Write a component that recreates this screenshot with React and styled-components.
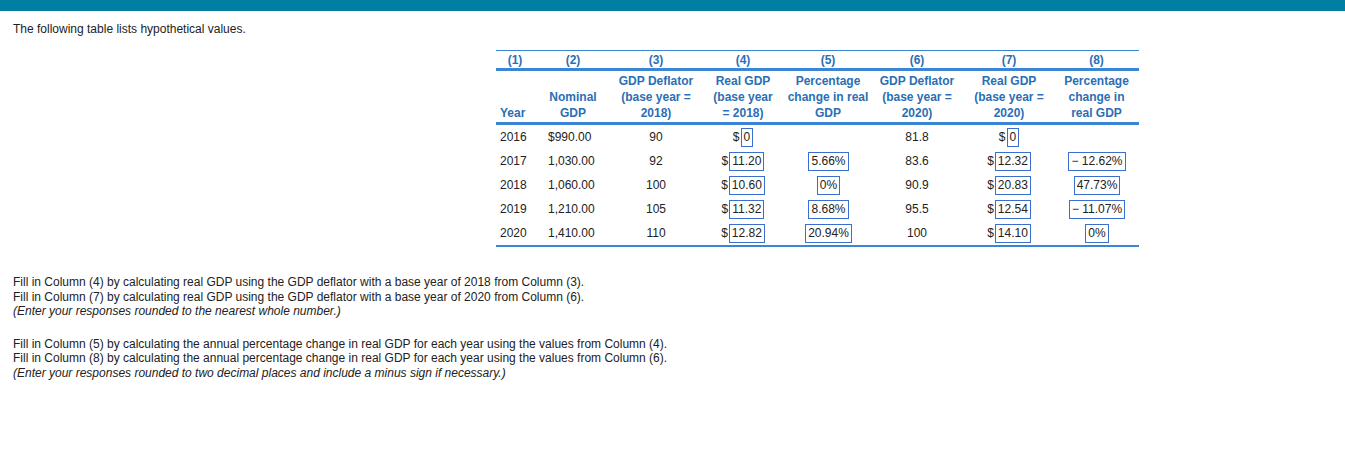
import React from "react";
import styled, { createGlobalStyle } from "styled-components";

const G = createGlobalStyle`
  body { margin: 0; font-family: Arial, "Liberation Sans", sans-serif; font-size: 12px; color: #222; background: #fff; }
`;
const TopBar = styled.div`height: 11px; background: #007fa3;`;
const Content = styled.div`padding: 11px 0 0 13px;`;
const Intro = styled.p`margin: 0 0 14px 0; line-height: 14px;`;
const Table = styled.table`
  margin-left: 483px; border-collapse: collapse; table-layout: fixed; width: 643px;
  border-top: 1px solid #3b86d4; border-bottom: 2px solid #3b86d4;
`;
const HNum = styled.th`
  color: #2a6fb5; font-weight: bold; text-align: center; padding: 2px 0 1px; line-height: 14px;
  border-bottom: 3px solid #3b86d4;
`;
const H = styled.th`
  color: #2a6fb5; font-weight: bold; text-align: ${p => p.$left ? "left" : "center"};
  vertical-align: bottom; line-height: 16px; padding: 2px 0 1px ${p => p.$left ? "4px" : "0"};
  border-bottom: 3px solid #3b86d4;
`;
const Td = styled.td`
  text-align: ${p => p.$left ? "left" : "center"}; padding: 0 0 0 ${p => p.$pl || 0}px;
  height: 24px; vertical-align: middle; line-height: 14px;
`;
const Box = styled.span`
  display: inline-block; border: 1px solid #3a6fd0; padding: 1px 2px; line-height: 15px; margin-left: 1px;
`;
const Para = styled.p`margin: 0; line-height: 14.5px;`;
const Block = styled.div`margin-top: ${p => p.$mt}px;`;
const I = styled.span`font-style: italic;`;

const rows = [
  ["2016", "$990.00", "90", "0", "", "81.8", "0", ""],
  ["2017", "1,030.00", "92", "11.20", "5.66%", "83.6", "12.32", "\u2212 12.62%"],
  ["2018", "1,060.00", "100", "10.60", "0%", "90.9", "20.83", "47.73%"],
  ["2019", "1,210.00", "105", "11.32", "8.68%", "95.5", "12.54", "\u2212 11.07%"],
  ["2020", "1,410.00", "110", "12.82", "20.94%", "100", "14.10", "0%"],
];
const widths = [38, 78, 88, 86, 84, 94, 90, 85];

export default function App() {
  return (
    <>
      <G />
      <TopBar />
      <Content>
        <Intro>The following table lists hypothetical values.</Intro>
        <Table>
          <colgroup>{widths.map((w, i) => <col key={i} style={{ width: w }} />)}</colgroup>
          <thead>
            <tr>{[1,2,3,4,5,6,7,8].map(n => <HNum key={n}>({n})</HNum>)}</tr>
            <tr>
              <H $left>Year</H>
              <H>Nominal<br />GDP</H>
              <H>GDP Deflator<br />(base year =<br />2018)</H>
              <H>Real GDP<br />(base year<br />= 2018)</H>
              <H>Percentage<br />change in real<br />GDP</H>
              <H>GDP Deflator<br />(base year =<br />2020)</H>
              <H>Real GDP<br />(base year =<br />2020)</H>
              <H>Percentage<br />change in<br />real GDP</H>
            </tr>
          </thead>
          <tbody>
            {rows.map((r, i) => (
              <tr key={i}>
                <Td $left $pl={4}>{r[0]}</Td>
                <Td $left $pl={14}>{r[1]}</Td>
                <Td>{r[2]}</Td>
                <Td>$<Box>{r[3]}</Box></Td>
                <Td>{r[4] && <Box>{r[4]}</Box>}</Td>
                <Td>{r[5]}</Td>
                <Td>$<Box>{r[6]}</Box></Td>
                <Td>{r[7] && <Box>{r[7]}</Box>}</Td>
              </tr>
            ))}
          </tbody>
        </Table>
        <Block $mt={28}>
          <Para>Fill in Column (4) by calculating real GDP using the GDP deflator with a base year of 2018 from Column (3).</Para>
          <Para>Fill in Column (7) by calculating real GDP using the GDP deflator with a base year of 2020 from Column (6).</Para>
          <Para><I>(Enter your responses rounded to the nearest whole number.)</I></Para>
        </Block>
        <Block $mt={18}>
          <Para>Fill in Column (5) by calculating the annual percentage change in real GDP for each year using the values from Column (4).</Para>
          <Para>Fill in Column (8) by calculating the annual percentage change in real GDP for each year using the values from Column (6).</Para>
          <Para><I>(Enter your responses rounded to two decimal places and include a minus sign if necessary.)</I></Para>
        </Block>
      </Content>
    </>
  );
}
